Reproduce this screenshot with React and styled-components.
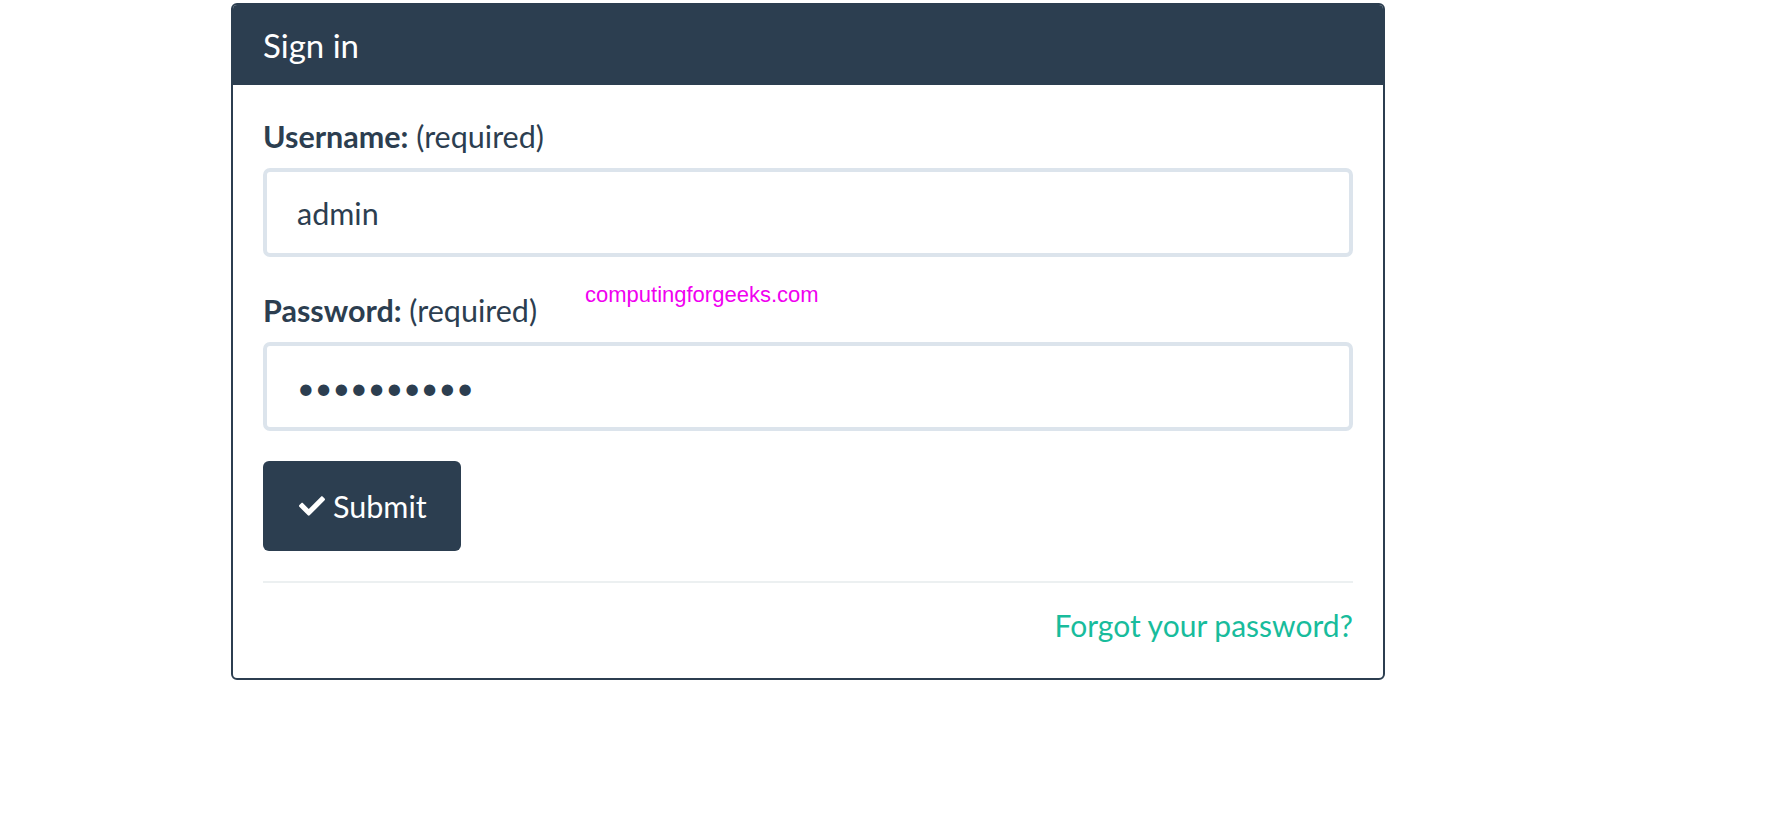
import React from "react";
import styled, { createGlobalStyle } from "styled-components";
import { FaCheck } from "react-icons/fa";

const GlobalStyle = createGlobalStyle`
  html, body {
    margin: 0;
    padding: 0;
    background: #ffffff;
  }
  body {
    font-family: Lato, "Noto Sans", sans-serif;
    color: #2c3e50;
    -webkit-font-smoothing: antialiased;
  }
  * {
    box-sizing: border-box;
  }
`;

const Page = styled.div`
  width: 1782px;
  height: 820px;
  padding: 3px 0 0 231px;
`;

const Panel = styled.div`
  position: relative;
  width: 1154px;
  border: 2px solid #2c3e50;
  border-radius: 6px;
  overflow: hidden;
  background: #ffffff;
`;

const PanelHeading = styled.div`
  display: flex;
  align-items: center;
  height: 80px;
  padding: 0 30px;
  background: #2c3e50;
  color: #ffffff;
  font-size: 33px;
  line-height: 1;
`;

const PanelBody = styled.form`
  display: flex;
  flex-direction: column;
  padding: 30px 30px 32px;
`;

const FormGroup = styled.div`
  display: flex;
  flex-direction: column;
  margin-bottom: ${(p) => p.$gap || 32}px;
`;

const Label = styled.label`
  font-size: 30.5px;
  line-height: 42px;
  margin-bottom: 11px;

  strong {
    font-weight: 700;
  }
`;

const Input = styled.input`
  height: 89px;
  width: 100%;
  padding: 0 30px;
  border: 4px solid #dce4ec;
  border-radius: 7px;
  font-family: Lato, "Noto Sans", sans-serif;
  font-size: 30.5px;
  color: #2c3e50;
  background: #ffffff;
  outline: none;
`;

const SubmitButton = styled.button`
  display: inline-flex;
  align-items: center;
  gap: 6px;
  align-self: flex-start;
  height: 90px;
  padding: 0 34px;
  border: none;
  border-radius: 6px;
  background: #2c3e50;
  color: #ffffff;
  font-family: Lato, "Noto Sans", sans-serif;
  font-size: 30.5px;
  cursor: pointer;

  svg {
    width: 30px;
    height: 26px;
  }
`;

const Divider = styled.hr`
  width: 100%;
  height: 2px;
  margin: 30px 0 21px;
  border: none;
  background: #ecf0f1;
`;

const FooterLinks = styled.div`
  display: flex;
  justify-content: flex-end;
`;

const ForgotLink = styled.a`
  color: #18bc9c;
  font-size: 30px;
  line-height: 42px;
  text-decoration: none;
`;

const Watermark = styled.span`
  position: absolute;
  left: 352px;
  top: 278px;
  font-family: "Liberation Sans", Arial, sans-serif;
  font-size: 22px;
  line-height: 24px;
  color: #f000f0;
  pointer-events: none;
`;

export default function App() {
  return (
    <>
      <GlobalStyle />
      <Page>
        <Panel>
          <PanelHeading>Sign in</PanelHeading>
          <PanelBody onSubmit={(e) => e.preventDefault()}>
            <FormGroup>
              <Label htmlFor="username">
                <strong>Username:</strong> (required)
              </Label>
              <Input id="username" type="text" value="admin" readOnly />
            </FormGroup>
            <FormGroup $gap={30}>
              <Label htmlFor="password">
                <strong>Password:</strong> (required)
              </Label>
              <Input id="password" type="password" value="password12" readOnly />
            </FormGroup>
            <SubmitButton type="submit">
              <FaCheck />
              Submit
            </SubmitButton>
            <Divider />
            <FooterLinks>
              <ForgotLink href="#">Forgot your password?</ForgotLink>
            </FooterLinks>
          </PanelBody>
          <Watermark>computingforgeeks.com</Watermark>
        </Panel>
      </Page>
    </>
  );
}
